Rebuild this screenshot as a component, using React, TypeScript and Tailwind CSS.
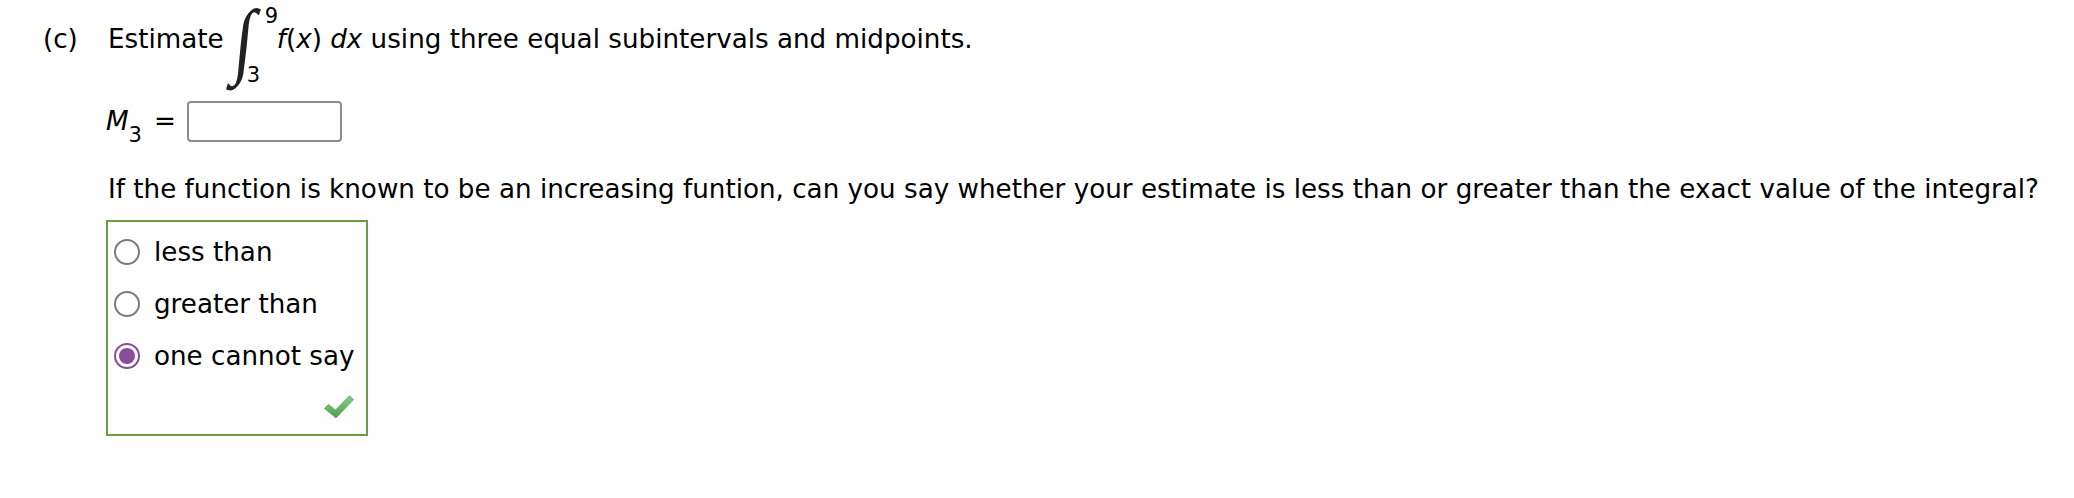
import React from "react";

const font = { fontFamily: '"DejaVu Sans", Verdana, sans-serif' };

// one answer option in the choice box
const Option = ({ label, checked }: { label: string; checked?: boolean }) => (
  <label className="flex h-[52px] items-center gap-[14px] whitespace-nowrap">
    {checked ? (
      <span className="flex h-[26px] w-[26px] shrink-0 items-center justify-center rounded-full border-2 border-[#8b4a9c]">
        <span className="h-[16px] w-[16px] rounded-full bg-[#8b4a9c]" />
      </span>
    ) : (
      <span className="h-[26px] w-[26px] shrink-0 rounded-full border-2 border-[#7b7b7b] bg-white" />
    )}
    <span className="leading-[30px]">{label}</span>
  </label>
);

const Check = () => (
  <svg width="30" height="24" viewBox="0 0 30 24">
    <defs>
      <linearGradient id="chk" x1="0" y1="0" x2="0" y2="1">
        <stop offset="0" stopColor="#86d086" />
        <stop offset="1" stopColor="#4f9e50" />
      </linearGradient>
    </defs>
    <path
      d="M0.5 13.5 L4.5 9.5 L11.5 15 L25.5 0.8 L29.5 4.5 L12 23 Z"
      fill="url(#chk)"
      stroke="#5aa45a"
      strokeWidth="0.8"
      strokeLinejoin="round"
    />
  </svg>
);

export default function App() {
  return (
    <div className="min-h-screen bg-white text-[26.2px] text-black" style={font}>
      {/* part (c) heading with the integral */}
      <div className="flex items-start pl-[43px] pt-[7px]">
        <span className="mt-[17px] w-[65px] leading-[30px]">(c)</span>
        <span className="mt-[17px] leading-[30px]">Estimate</span>
        <span className="relative ml-[8px] h-[81px] w-[45px]">
          <span
            className="absolute left-[7px] top-[-9px] origin-top scale-y-[1.2] skew-x-[-7deg] text-[70px] leading-none text-[#222]"
            style={{ fontFamily: '"Liberation Serif", serif' }}
          >
            ∫
          </span>
          <span className="absolute left-[33px] top-[-1px] text-[21px] leading-none">9</span>
          <span className="absolute left-[15px] top-[58px] text-[21px] leading-none">3</span>
        </span>
        <span className="mt-[17px] whitespace-pre leading-[30px]">
          <i>f</i>(<i>x</i>) <i>dx</i> using three equal subintervals and midpoints.
        </span>
      </div>

      <div className="pl-[106px]">
        {/* answer input */}
        <div className="mt-[13px] flex items-start">
          <span className="mt-[5px] leading-[30px]">
            <i>M</i>
            <sub className="relative top-[2px] text-[21px] leading-none align-[-10px]">3</sub>
          </span>
          <span className="ml-[12px] mt-[5px] leading-[30px]">=</span>
          <input
            type="text"
            className="ml-[11px] h-[41px] w-[155px] rounded-[4px] border-2 border-[#8c8c8c] bg-white outline-none"
          />
        </div>

        <p className="mt-[30px] ml-[2px] whitespace-nowrap leading-[30px]">
          If the function is known to be an increasing funtion, can you say whether your estimate is less than or greater than the exact value of the integral?
        </p>

        {/* choices */}
        <div className="mt-[16px] flex w-[262px] flex-col border-2 border-[#6b9d46] pl-[6px] pr-[12px] pt-[4px] pb-[15px]">
          <Option label="less than" />
          <Option label="greater than" />
          <Option label="one cannot say" checked />
          <div className="mt-[13px] flex justify-end">
            <Check />
          </div>
        </div>
      </div>
    </div>
  );
}
